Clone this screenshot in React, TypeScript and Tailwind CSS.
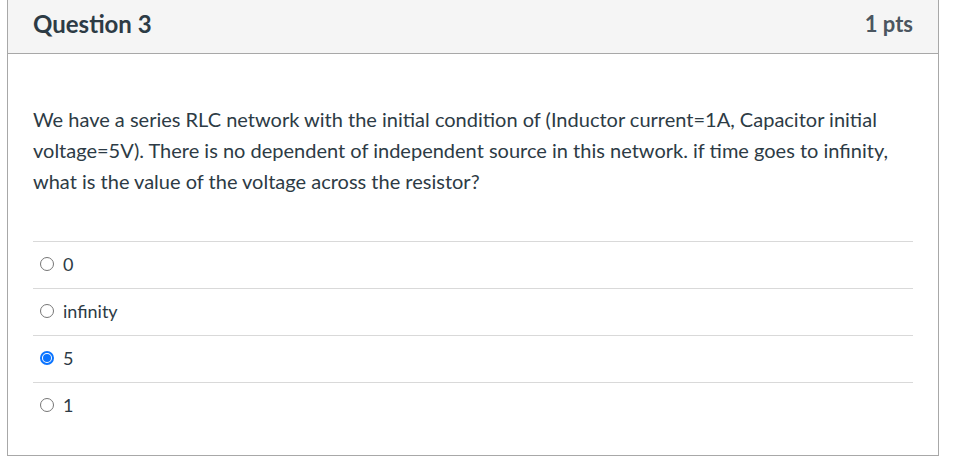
import React from "react";

const answers = [
  { id: "a0", label: "0", checked: false },
  { id: "a1", label: "infinity", checked: false },
  { id: "a2", label: "5", checked: true },
  { id: "a3", label: "1", checked: false },
];

function Radio({ checked }: { checked: boolean }) {
  return checked ? (
    <span className="w-[14px] h-[14px] rounded-full border-2 border-[#0b74ff] flex items-center justify-center shrink-0">
      <span className="w-[8px] h-[8px] rounded-full bg-[#0b74ff]" />
    </span>
  ) : (
    <span className="w-[14px] h-[14px] rounded-full border border-[#767676] shrink-0" />
  );
}

export default function App() {
  return (
    <div className="w-[959px] h-[460px] bg-white" style={{ fontFamily: "Lato, 'Liberation Sans', sans-serif" }}>
      <div className="ml-[7px] w-[932px] border border-t-0 border-[#a8a8a8]">
        {/* header */}
        <div className="h-[54px] bg-[#f5f5f5] border-b border-[#a8a8a8] px-[25px] pb-[6px] flex items-center justify-between text-[#2d3b45]">
          <h2 className="text-[24px] font-bold">Question 3</h2>
          <span className="text-[22px] font-bold text-[#4b5660]">1 pts</span>
        </div>

        {/* body */}
        <div className="px-[25px] pt-[50px] pb-[26px] text-[#2d3b45]">
          <p className="text-[20px] leading-[31px]">
            We have a series RLC network with the initial condition of (Inductor current=1A, Capacitor initial
            voltage=5V). There is no dependent of independent source in this network. if time goes to infinity,
            what is the value of the voltage across the resistor?
          </p>

          <div className="mt-[44px]">
            {answers.map((a) => (
              <div key={a.id} className="h-[47px] border-t border-[#d9d9d9] flex items-center gap-[9px] pl-[7px] pb-[2px]">
                <Radio checked={a.checked} />
                <span className="text-[18px] text-[#2d3b45]">{a.label}</span>
              </div>
            ))}
          </div>
        </div>
      </div>
    </div>
  );
}
